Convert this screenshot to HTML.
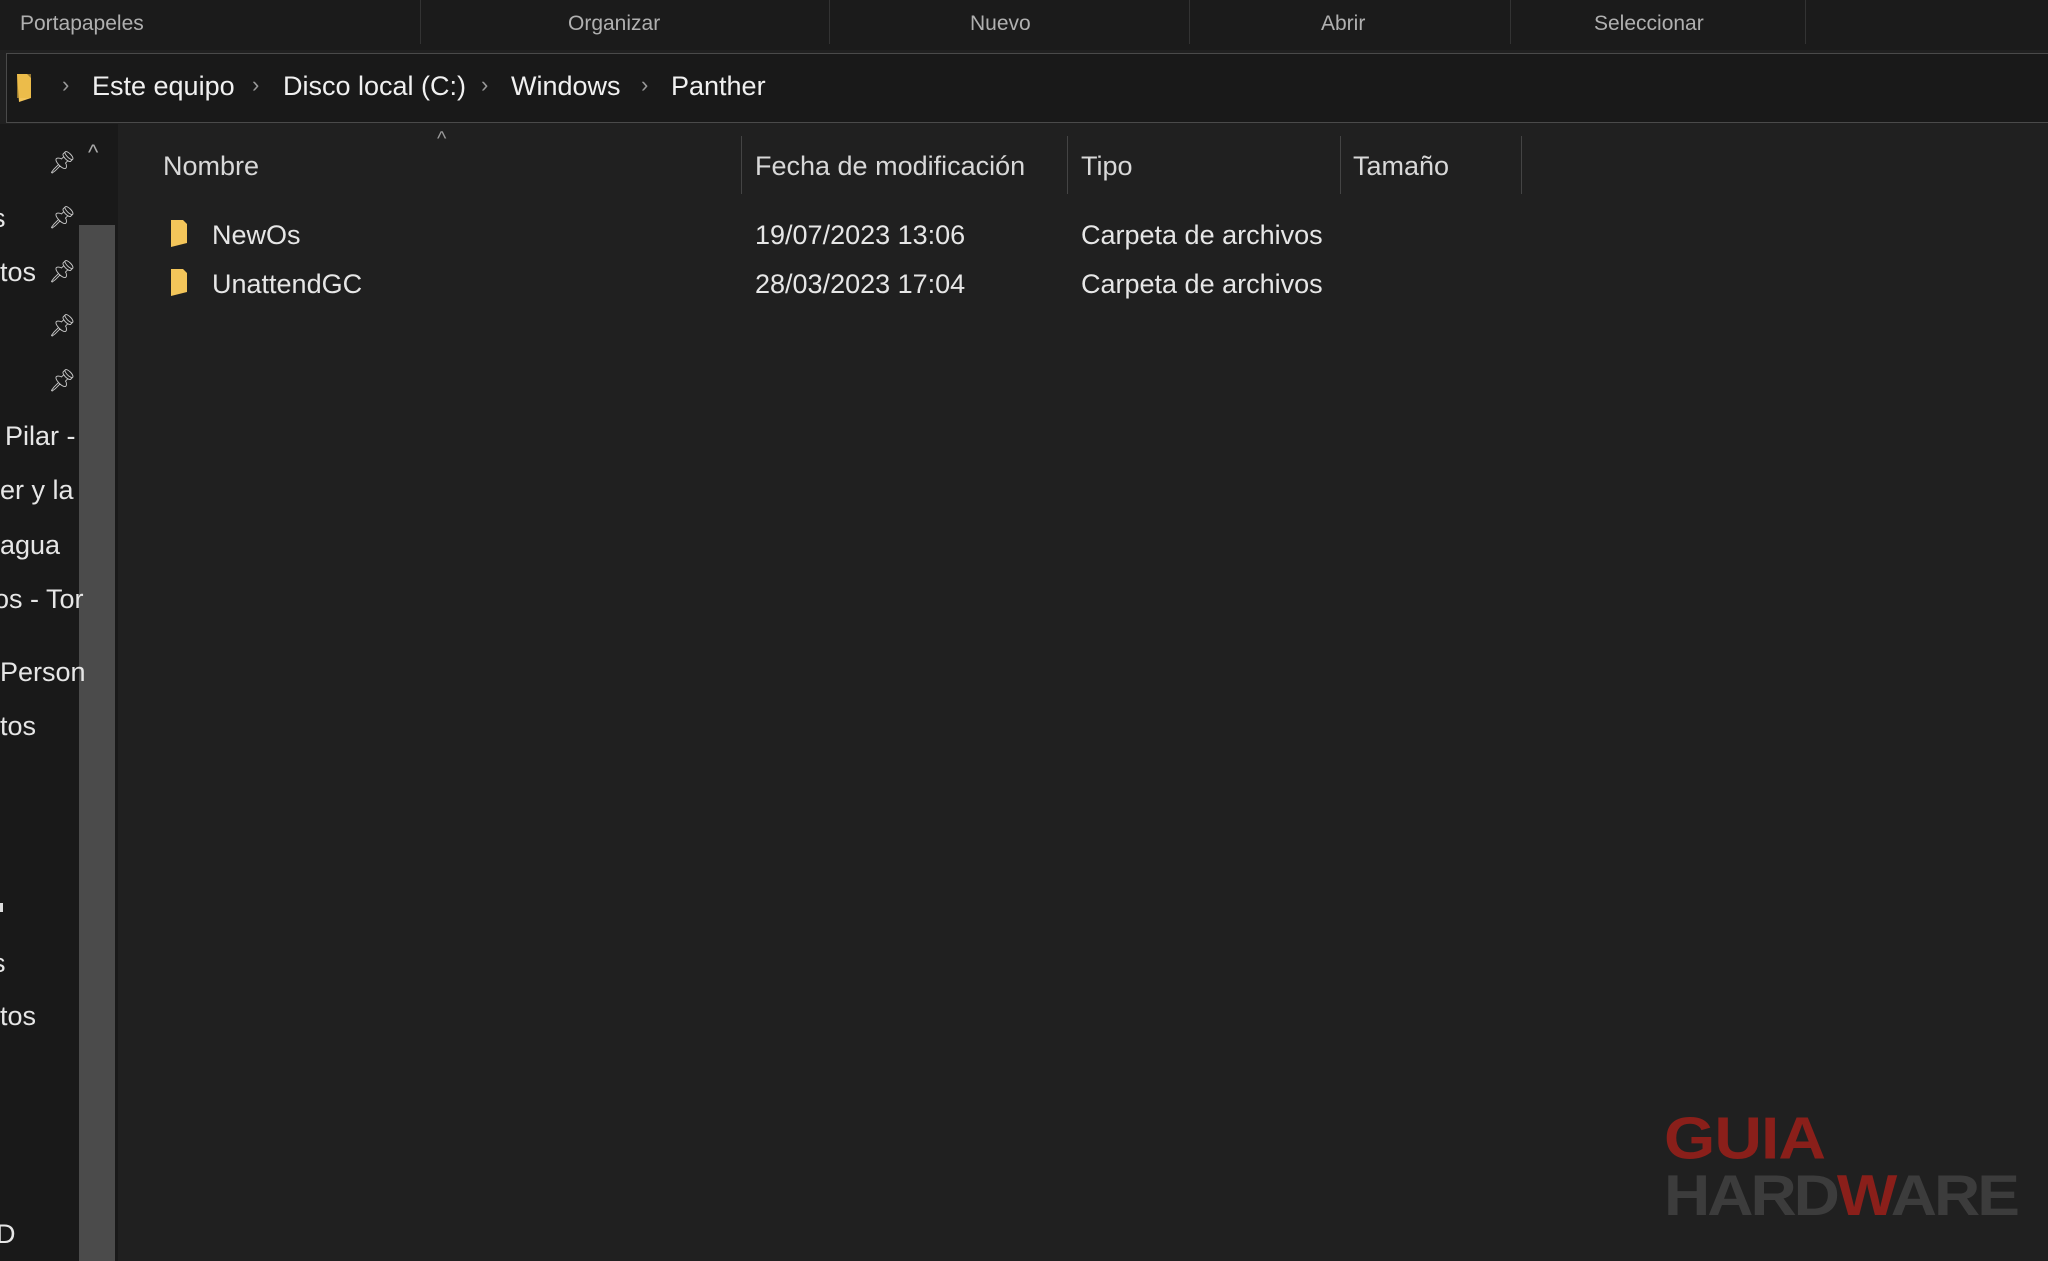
<!DOCTYPE html>
<html><head><meta charset="utf-8"><style>
body{margin:0;width:2048px;height:1261px;background:#202020;overflow:hidden;font-family:"Liberation Sans",sans-serif;position:relative;color:#e8e8e8}
.a{position:absolute;white-space:nowrap}
.rib{position:absolute;left:0;top:0;width:2048px;height:50px;background:#1b1b1b}
.rl{position:absolute;top:12px;font-size:21px;color:#b0b0b0}
.sep{position:absolute;top:0;width:1px;height:44px;background:#333}
.addr{position:absolute;left:6px;top:53px;width:2050px;height:68px;border:1px solid #4a4a4a;background:#191919}
.bc{position:absolute;top:71px;font-size:27px;color:#f0f0f0}
.ch{position:absolute;top:72px;font-size:22px;color:#999}
.side{position:absolute;left:0;top:124px;width:118px;height:1137px;background:#191919}
.hd{position:absolute;top:151px;font-size:27px;color:#d8d8d8}
.cs{position:absolute;top:136px;width:1px;height:58px;background:#444}
.row{position:absolute;font-size:27px;color:#e6e6e6}
.st{position:absolute;left:0;font-size:27px;color:#e6e6e6}
.pin{position:absolute;left:48px;font-size:22px;color:#c8c8c8}
</style></head><body>
<div class="rib"></div>
<div class="rl" style="left:20px">Portapapeles</div>
<div class="sep" style="left:420px"></div>
<div class="rl" style="left:568px">Organizar</div>
<div class="sep" style="left:829px"></div>
<div class="rl" style="left:970px">Nuevo</div>
<div class="sep" style="left:1189px"></div>
<div class="rl" style="left:1321px">Abrir</div>
<div class="sep" style="left:1510px"></div>
<div class="rl" style="left:1594px">Seleccionar</div>
<div class="sep" style="left:1805px"></div>
<div class="addr"></div>
<svg class="a" style="left:15px;top:72px" width="24" height="32"><path d="M2 2h10l4 4v20l-12 4z" fill="#f3c55a"/><path d="M2 2h14v24H2z" fill="#e8b640" opacity=".6"/></svg>
<div class="ch" style="left:62px">›</div>
<div class="bc" style="left:92px">Este equipo</div>
<div class="ch" style="left:252px">›</div>
<div class="bc" style="left:283px">Disco local (C:)</div>
<div class="ch" style="left:481px">›</div>
<div class="bc" style="left:511px">Windows</div>
<div class="ch" style="left:641px">›</div>
<div class="bc" style="left:671px">Panther</div>
<div class="side"></div>
<div class="a" style="left:79px;top:225px;width:36px;height:1036px;background:#4b4b4b"></div>
<div class="a" style="left:88px;top:140px;font-size:22px;color:#aaa">^</div>
<div class="pin" style="top:150px">📌︎</div>
<div class="pin" style="top:205px">📌︎</div>
<div class="pin" style="top:259px">📌︎</div>
<div class="pin" style="top:313px">📌︎</div>
<div class="pin" style="top:368px">📌︎</div>
<div class="st" style="top:203px;left:-8px">s</div>
<div class="st" style="top:257px">tos</div>
<div class="st" style="top:421px;left:5px">Pilar -</div>
<div class="st" style="top:475px">er y la</div>
<div class="st" style="top:530px">agua</div>
<div class="st" style="top:584px;left:-6px">os - Tor</div>
<div class="st" style="top:657px">Person</div>
<div class="st" style="top:711px">tos</div>
<div class="a" style="left:0;top:903px;width:3px;height:9px;background:#ddd"></div>
<div class="st" style="top:948px;left:-8px">s</div>
<div class="st" style="top:1001px">tos</div>
<div class="st" style="top:1219px;left:-4px">D</div>
<div class="a" style="left:437px;top:128px;font-size:20px;color:#999">^</div>
<div class="hd" style="left:163px">Nombre</div>
<div class="cs" style="left:741px"></div>
<div class="hd" style="left:755px">Fecha de modificación</div>
<div class="cs" style="left:1067px"></div>
<div class="hd" style="left:1081px">Tipo</div>
<div class="cs" style="left:1340px"></div>
<div class="hd" style="left:1353px">Tamaño</div>
<div class="cs" style="left:1521px"></div>
<svg class="a" style="left:170px;top:219px" width="24" height="30"><path d="M1 1h12l4 4v19l-16 4z" fill="#f3c55a"/></svg>
<div class="row" style="left:212px;top:220px">NewOs</div>
<div class="row" style="left:755px;top:220px">19/07/2023 13:06</div>
<div class="row" style="left:1081px;top:220px">Carpeta de archivos</div>
<svg class="a" style="left:170px;top:268px" width="24" height="30"><path d="M1 1h12l4 4v19l-16 4z" fill="#f3c55a"/></svg>
<div class="row" style="left:212px;top:269px">UnattendGC</div>
<div class="row" style="left:755px;top:269px">28/03/2023 17:04</div>
<div class="row" style="left:1081px;top:269px">Carpeta de archivos</div>
<div class="a" style="left:1664px;top:1100px;font-size:66px;font-weight:bold;color:#8a1f1a;letter-spacing:-1px;transform:scaleY(.9)">GUIA</div>
<div class="a" style="left:1664px;top:1158px;font-size:64px;font-weight:bold;color:#3c3c3c;letter-spacing:-3px;transform:scaleY(.9)">HARD<span style="color:#8a1f1a">W</span>ARE</div>
</body></html>
